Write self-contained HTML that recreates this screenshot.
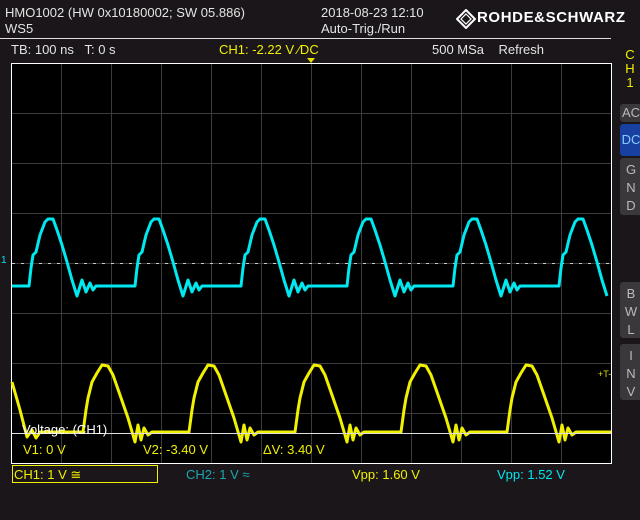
<!DOCTYPE html>
<html><head><meta charset="utf-8"><style>
*{margin:0;padding:0}
body{width:640px;height:520px;background:#1a1619;position:relative;overflow:hidden;font-family:"Liberation Sans",sans-serif;font-size:13px;color:#e4e4e4}
.t{position:absolute;white-space:nowrap;line-height:15px}
.btn{position:absolute;left:620px;width:22px;background:#3a383b;border-radius:3px;color:#bbb;font-size:13px;text-align:center;line-height:18px}
</style></head><body>
<div class="t" style="left:5px;top:5px">HMO1002 (HW 0x10180002; SW 05.886)</div>
<div class="t" style="left:5px;top:21px">WS5</div>
<div class="t" style="left:321px;top:5px">2018-08-23 12:10</div>
<div class="t" style="left:321px;top:21px">Auto-Trig./Run</div>
<svg style="position:absolute;left:456px;top:9px" width="20" height="20" viewBox="0 0 20 20"><path d="M10 1L19 10L10 19L1 10Z" fill="none" stroke="#fff" stroke-width="2"/><path d="M10 5L15 10L10 15L5 10Z" fill="none" stroke="#fff" stroke-width="1.2"/></svg>
<div class="t" style="left:477px;top:10px;font-weight:bold;font-size:15px;letter-spacing:0.6px;color:#fff">ROHDE&amp;SCHWARZ</div>
<div style="position:absolute;left:0;top:38px;width:611px;height:1px;background:#ddd"></div>
<div class="t" style="left:11px;top:42px">TB: 100 ns &nbsp; T: 0 s</div>
<div class="t" style="left:219px;top:42px;color:#f0f000">CH1: -2.22 V ⁄DC</div>
<div class="t" style="left:432px;top:42px">500 MSa &nbsp;&nbsp; Refresh</div>
<div class="t" style="left:307px;top:58px;width:0;height:0;border-left:4px solid transparent;border-right:4px solid transparent;border-top:5px solid #e0e000"></div>
<div class="t" style="left:624px;top:48px;color:#f0f000;line-height:14px;text-align:center;width:12px">C<br>H<br>1</div>
<div class="btn" style="top:104px;height:18px">AC</div>
<div class="btn" style="top:124px;height:32px;line-height:32px;background:#1840a0;color:#8cf">DC</div>
<div class="btn" style="top:158px;height:57px;line-height:18px;padding-top:3px;box-sizing:border-box">G<br>N<br>D</div>
<div class="btn" style="top:282px;height:56px;padding-top:3px;box-sizing:border-box">B<br>W<br>L</div>
<div class="btn" style="top:344px;height:56px;padding-top:3px;box-sizing:border-box">I<br>N<br>V</div>
<svg style="position:absolute;left:0;top:0" width="640" height="520" id="s">
<rect x="11.5" y="63.5" width="600" height="400" fill="#000" stroke="#fff" stroke-width="1"/>
<g stroke="#3c3c3c" stroke-width="1" id="g"></g>
<line x1="12" y1="263.5" x2="611" y2="263.5" stroke="#ccc" stroke-dasharray="3,6"/>
<polyline id="cy" fill="none" stroke="#00e8f0" stroke-width="3" stroke-linejoin="round"/>
<polyline id="ye" fill="none" stroke="#f0f000" stroke-width="3" stroke-linejoin="round"/>
<line x1="12" y1="433.5" x2="611" y2="433.5" stroke="#ddd"/>
<text x="1" y="263" fill="#00e8f0" font-size="10" font-family="Liberation Sans">1</text>
<text x="598" y="377" fill="#e0e000" font-size="9" font-family="Liberation Sans">+T-</text>
</svg>
<div class="t" style="left:22px;top:422px;color:#fff">Voltage: (CH1)</div>
<div class="t" style="left:23px;top:442px;color:#f0f000">V1: 0 V</div>
<div class="t" style="left:143px;top:442px;color:#f0f000">V2: -3.40 V</div>
<div class="t" style="left:263px;top:442px;color:#f0f000">ΔV: 3.40 V</div>
<div style="position:absolute;left:12px;top:465px;width:144px;height:16px;border:1px solid #f0f000"></div>
<div class="t" style="left:14px;top:467px;color:#f0f000">CH1: 1 V ≅</div>
<div class="t" style="left:186px;top:467px;color:#1aa8b0">CH2: 1 V ≈</div>
<div class="t" style="left:352px;top:467px;color:#f0f000">Vpp: 1.60 V</div>
<div class="t" style="left:497px;top:467px;color:#00e8f0">Vpp: 1.52 V</div>
<script>
var g=document.getElementById('g'),h='';
for(var i=1;i<12;i++)h+='<line x1="'+(11.5+50*i)+'" y1="64" x2="'+(11.5+50*i)+'" y2="463"/>';
for(var j=1;j<8;j++)h+='<line x1="12" y1="'+(63.5+50*j)+'" x2="611" y2="'+(63.5+50*j)+'"/>';
g.innerHTML=h;
function wave(rel,P,start,end){var pts=[];for(var k=-1;k<7;k++){rel.forEach(function(p){var x=p[0]+k*P;pts.push([x,p[1]]);});}
return pts.filter(function(p){return p[0]>=start&&p[0]<=end}).map(function(p){return p[0].toFixed(1)+','+p[1]}).join(' ');}
var c=[[0,286],[2,268],[4,255],[7,252],[11,235],[16,222],[19,219],[24,219],[28,230],[33,245],[38,262],[43,280],[48,296],[53,280],[57,292],[61,283],[64,290],[67,286],[106,286]];
c=c.map(function(p){return [p[0]+29,p[1]]});
document.getElementById('cy').setAttribute('points','12,286 '+wave(c,106,13,611));
var y=[[0,432],[3,410],[5,398],[9,382],[14,373],[19,365],[25,366],[30,375],[37,395],[45,418],[52,442],[55,425],[58,440],[61,428],[65,435],[69,432],[106,432]];
y=y.map(function(p){return [p[0]+83,p[1]]});
document.getElementById('ye').setAttribute('points','12,382 20,410 27,437 32,430 36,438 40,432 '+wave(y,106,82,611)+' 611,432');
</script>
</body></html>
